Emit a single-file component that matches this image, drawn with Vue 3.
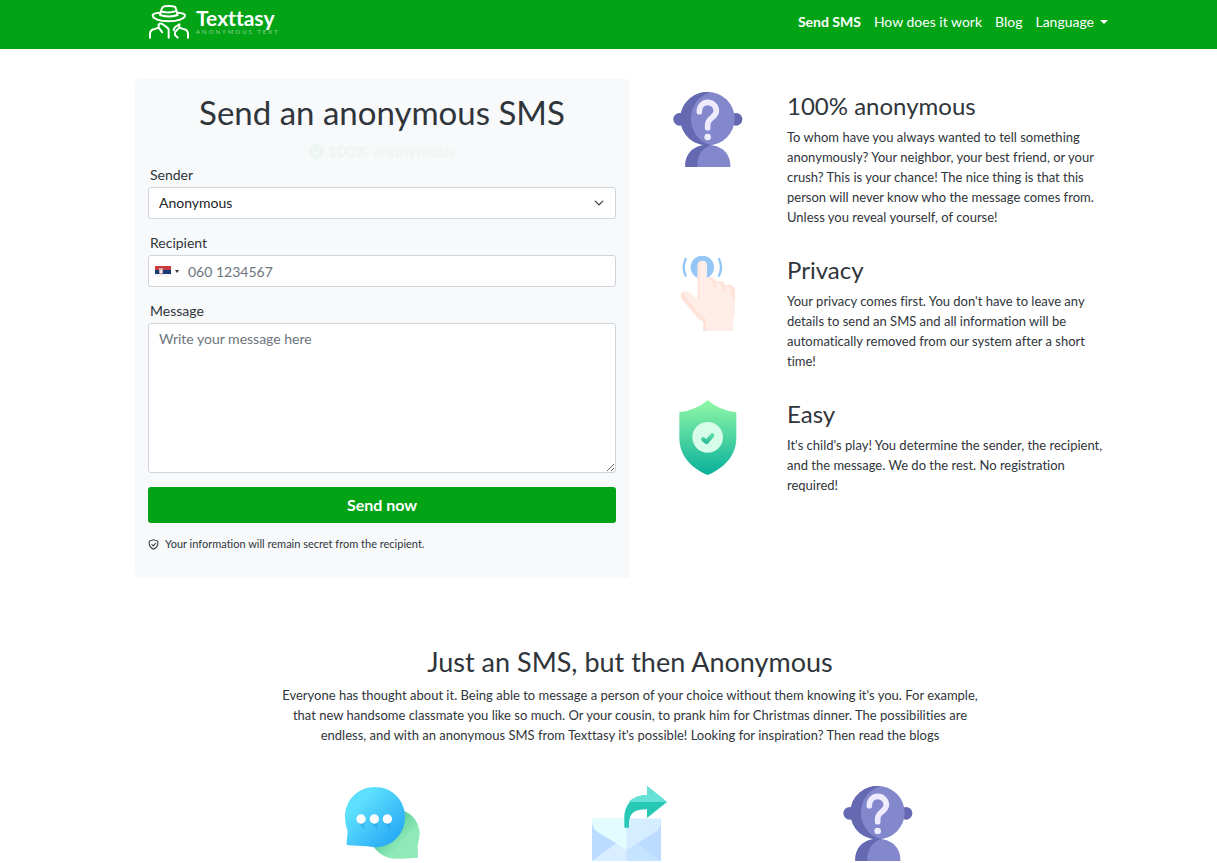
<script setup>
import { ref } from 'vue'

const sender = ref('Anonymous')
const recipient = ref('')
const message = ref('')

const features = [
  {
    icon: 'person',
    title: '100% anonymous',
    text: 'To whom have you always wanted to tell something anonymously? Your neighbor, your best friend, or your crush? This is your chance! The nice thing is that this person will never know who the message comes from. Unless you reveal yourself, of course!',
  },
  {
    icon: 'touch',
    title: 'Privacy',
    text: "Your privacy comes first. You don't have to leave any details to send an SMS and all information will be automatically removed from our system after a short time!",
  },
  {
    icon: 'shield',
    title: 'Easy',
    text: "It's child's play! You determine the sender, the recipient, and the message. We do the rest. No registration required!",
  },
]
</script>

<template>
  <svg class="defs" aria-hidden="true">
    <defs>
      <linearGradient id="shield-fill" x1="0" y1="0" x2="0" y2="1">
        <stop offset="0" stop-color="#92f8a6" />
        <stop offset="1" stop-color="#08b09b" />
      </linearGradient>
      <linearGradient id="tick-fill" x1="0" y1="0" x2="0" y2="1">
        <stop offset="0" stop-color="#5ddaa2" />
        <stop offset="1" stop-color="#2bbf9c" />
      </linearGradient>
      <linearGradient id="bubble-fill" x1="0" y1="0" x2="1" y2="1">
        <stop offset="0.25" stop-color="#5de0fd" />
        <stop offset="1" stop-color="#1c9df5" />
      </linearGradient>
      <linearGradient id="reply-fill" x1="0" y1="0" x2="1" y2="1">
        <stop offset="0.35" stop-color="#62cf98" />
        <stop offset="0.65" stop-color="#8feab8" />
      </linearGradient>
      <symbol id="person" viewBox="14 36 225 225">
        <circle cx="43" cy="118" r="19" fill="#6569b2" />
        <circle cx="212" cy="118" r="19" fill="#6569b2" />
        <path d="M60 261v-5c0-36 27-62 67-62s68 26 68 62v5z" fill="#8387cb" />
        <path d="M60 261v-5c0-36 27-62 67-62l11 1c-25 8-42 28-42 61v5z" fill="#6569b2" />
        <circle cx="128" cy="116" r="80" fill="#8387cb" />
        <path d="M137 37a80 80 0 1 0 0 158c-35-8-60-40-60-79s25-71 60-79z" fill="#6569b2" />
        <path d="M102 95c0-17 11-28 25-28s26 11 26 26c0 19-26 21-26 41v9" fill="none" stroke="#efebff" stroke-width="17" stroke-linecap="round" stroke-linejoin="round" />
        <circle cx="127" cy="171" r="10" fill="#efebff" />
      </symbol>
      <symbol id="touch" viewBox="14 33 225 225">
        <circle cx="111" cy="67" r="35" fill="#93c6f6" />
        <path d="M61 42q-12 26 0 50M161 42q12 26 0 50" fill="none" stroke="#93c6f6" stroke-width="7" stroke-linecap="round" />
        <path d="M97 61q0-14 14-14t14 14v37q22-4 28 13 20-7 27 10 21-6 29 13v64q0 14-5 26v34h-90v-29q-16-6-24-20L48 160q-4-16 7-21 10-3 18 5l24 17z" fill="#ffeee7" />
        <path d="M125 98q22-4 28 13v22q-8 0-8-8 0-20-20-27zM153 111q20-7 27 10v20q-9 0-9-8 0-17-18-22zM180 121q21-6 29 13v30q-9 0-9-10 0-26-20-33zM48 160q-4-16 7-21 1 8 8 20l41 49q6 7 18 14v36h-8v-29q-16-6-24-20z" fill="#ffe2d8" />
        <path d="M97 61q0-14 14-14-7 4-7 15v98l-7 2z" fill="#ffe5dc" />
      </symbol>
      <symbol id="shield" viewBox="14 27 225 225">
        <path d="M127 27q33 30 86 37v76c0 54-37 91-86 112-49-21-85-58-85-112V64q52-7 85-37z" fill="url(#shield-fill)" />
        <circle cx="127" cy="139" r="46" fill="#d7fdea" />
        <path d="M114 145l9 8 18-20" fill="none" stroke="url(#tick-fill)" stroke-width="13" stroke-linecap="round" stroke-linejoin="round" />
      </symbol>
      <symbol id="chat" viewBox="30 22 225 225">
        <path d="M206 96c35 13 55 51 46 85l-4 20 1 36-48 3c-38 3-66-9-86-36z" fill="url(#reply-fill)" />
        <path d="M120 25c51 0 90 39 90 90s-39 91-90 91l-25-3-54-3c-6 0-7-4-6-9l3-34c-4-11-8-26-8-42 0-51 39-90 90-90z" fill="url(#bubble-fill)" />
        <path d="M69 132l20 21-1-38zM108 132l20 21-1-38zM147 132l20 21-1-38z" fill="#2096dc" opacity=".4" />
        <circle cx="78" cy="121" r="14" fill="#fff" />
        <circle cx="118" cy="121" r="14" fill="#fff" />
        <circle cx="157" cy="121" r="14" fill="#fff" />
      </symbol>
      <symbol id="forward" viewBox="36 22 225 225">
        <path d="M36 120h207v127H36z" fill="#bcdcff" />
        <path d="M36 247l104-76v76z" fill="#d9efff" />
        <path d="M140 171l103 76H140z" fill="#c5e3ff" />
        <path d="M36 120h104v93L50 158q-14-9-14-38z" fill="#e3fdff" />
        <path d="M140 120h103q0 29-14 38l-89 55z" fill="#d5eeff" />
        <path d="M133 147v-28c0-42 27-70 68-70V22l60 48-60 48V92c-38 0-54 11-54 45v10z" fill="#28c8b7" />
        <path d="M146 70c13-14 32-21 55-21V22l60 48z" fill="#67e0d5" />
      </symbol>
    </defs>
  </svg>

  <header class="navbar">
    <div class="container nav-inner">
      <a class="brand" href="#" aria-label="Texttasy home">
        <svg class="brand-mark" viewBox="13 9 120 102" aria-hidden="true">
          <g fill="none" stroke="#fff" stroke-width="6" stroke-linecap="round" stroke-linejoin="round">
            <path d="M46 39l5-18q2-7 9-8 12-2 25 0 8 1 9 8l5 18q-26 9-53 0z" />
            <path d="M53 29q20 5 38-1" />
            <path d="M45 32q-21 2-21 8c0 10 20 18 48 18s49-8 49-18q0-6-21-8" />
            <path d="M16 107V97q0-12 11-15l15-5V67q5-5 11-1l14 10q5 3 5 9v22M42 77l11 14" />
            <path d="M130 107V97q0-12-11-15l-15-5V67l-12 8q-4 3-5 9M104 77L91 90v9l8 8" />
          </g>
        </svg>
        <span class="brand-text">
          <span class="brand-name">Texttasy</span>
          <span class="brand-tag">ANONYMOUS TEXT</span>
        </span>
      </a>
      <nav class="links" aria-label="Main">
        <a class="active" href="#">Send SMS</a>
        <a href="#how">How does it work</a>
        <a href="#blog">Blog</a>
        <button type="button" class="language">Language<span class="caret"></span></button>
      </nav>
    </div>
  </header>

  <main class="page">
    <div class="container intro">
      <form class="card" @submit.prevent>
        <h1>Send an anonymous SMS</h1>
        <p class="badge">
          <svg viewBox="0 0 16 16" aria-hidden="true">
            <circle cx="8" cy="8" r="8" fill="currentColor" />
            <path d="M4.500 8.300l2.500 2.500 4.500-5.300" fill="none" stroke="#f8f9fb" stroke-width="1.500" stroke-linecap="round" />
          </svg>
          100% anonymous
        </p>

        <div class="field">
          <label for="sender">Sender</label>
          <div class="control">
            <select id="sender" v-model="sender">
              <option>Anonymous</option>
              <option>Custom</option>
            </select>
            <svg class="chevron" viewBox="0 0 16 16" aria-hidden="true">
              <path d="M2 5l6 6 6-6" fill="none" stroke="#343a40" stroke-width="2" stroke-linecap="round" stroke-linejoin="round" />
            </svg>
          </div>
        </div>

        <div class="field">
          <label for="recipient">Recipient</label>
          <div class="control phone">
            <button type="button" class="country" aria-label="Select country">
              <svg class="flag" viewBox="0 0 16 11" aria-hidden="true">
                <path fill="#f4f5f6" d="M0 0h16v11H0z" />
                <path fill="#c83a40" d="M0 0h16v4H0z" />
                <path fill="#173c7a" d="M0 4h16v4H0z" />
                <path fill="#dba5a7" d="M4 2h4v5L6 9 4 7z" />
                <path fill="#f6e7e4" d="M5 4h2v3H5z" />
              </svg>
              <span class="caret small"></span>
            </button>
            <input id="recipient" v-model="recipient" type="tel" placeholder="060 1234567" />
          </div>
        </div>

        <div class="field">
          <label for="message">Message</label>
          <textarea id="message" v-model="message" placeholder="Write your message here"></textarea>
        </div>

        <button type="submit" class="send">Send now</button>

        <p class="note">
          <svg viewBox="0 0 16 16" aria-hidden="true">
            <path d="M8 1q3 2 6 2 2 8-6 12-8-4-6-12 3 0 6-2zM5.500 8l2 2 3.500-3.500" fill="none" stroke="currentColor" stroke-width="1.500" stroke-linecap="round" stroke-linejoin="round" />
          </svg>
          Your information will remain secret from the recipient.
        </p>
      </form>

      <section class="features">
        <article v-for="f in features" :key="f.title" class="feature">
          <svg class="picture" aria-hidden="true"><use :href="'#' + f.icon" /></svg>
          <div>
            <h2>{{ f.title }}</h2>
            <p>{{ f.text }}</p>
          </div>
        </article>
      </section>
    </div>

    <section class="about">
      <h2>Just an SMS, but then Anonymous</h2>
      <p>
        Everyone has thought about it. Being able to message a person of your choice without them
        knowing it's you. For example, that new handsome classmate you like so much. Or your cousin,
        to prank him for Christmas dinner. The possibilities are endless, and with an anonymous SMS
        from Texttasy it's possible! Looking for inspiration? Then read the blogs
      </p>
      <div class="steps">
        <svg v-for="icon in ['chat', 'forward', 'person']" :key="icon" class="picture" aria-hidden="true">
          <use :href="'#' + icon" />
        </svg>
      </div>
    </section>
  </main>
</template>

<style>
body {
  margin: 0;
  background: #fff;
  overflow: hidden;
}
</style>

<style scoped>
* {
  box-sizing: border-box;
}
.defs {
  position: absolute;
  width: 0;
  height: 0;
}
.navbar,
.page {
  font-family: Lato, "Liberation Sans", sans-serif;
  font-size: 14px;
  line-height: 20px;
  font-variant-ligatures: none;
  color: #2f353a;
  padding-left: 43px;
}
h1,
h2,
p {
  margin: 0;
  font-weight: 400;
}
button,
input,
select,
textarea {
  font: inherit;
  color: inherit;
}
.container {
  max-width: 990px;
  margin: 0 auto;
}
.navbar {
  background: #02a315;
}
.nav-inner {
  display: flex;
  align-items: center;
  justify-content: space-between;
  padding: 4px 17px 9px 14px;
}
.brand {
  display: flex;
  align-items: center;
  gap: 7px;
  color: #fff;
  text-decoration: none;
}
.brand-mark {
  width: 40px;
  height: 36px;
}
.brand-text {
  display: flex;
  flex-direction: column;
}
.brand-name {
  font-size: 21px;
  line-height: 20px;
  font-weight: 700;
}
.brand-tag {
  font-size: 6px;
  line-height: 8px;
  letter-spacing: 2px;
  opacity: 0.5;
}
.links {
  display: flex;
  gap: 13px;
}
.links a,
.language {
  color: #fff;
  text-decoration: none;
}
.links .active {
  font-weight: 700;
}
.language {
  display: flex;
  align-items: center;
  gap: 6px;
  padding: 0;
  border: 0;
  background: none;
}
.caret {
  border: 4px solid transparent;
  border-top-color: currentColor;
  border-bottom: 0;
}
.caret.small {
  border-width: 3px 2px 0;
}
.page {
  padding-top: 30px;
}
.intro {
  display: grid;
  grid-template-columns: 1fr 1fr;
}
.card {
  display: flex;
  flex-direction: column;
  padding: 12px 14px 24px 13px;
  border-radius: 4px;
  background: #f8f9fb;
}
h1 {
  font-size: 33px;
  line-height: 42px;
  text-align: center;
}
.badge {
  display: flex;
  align-items: center;
  justify-content: center;
  gap: 4px;
  margin: 6px 0 2px;
  font-size: 16px;
  line-height: 24px;
  font-weight: 700;
  color: #edf6f1;
}
.badge svg {
  width: 15px;
  height: 15px;
}
.field {
  display: flex;
  flex-direction: column;
  gap: 2px;
  margin-bottom: 14px;
}
label {
  padding-left: 2px;
}
.control {
  position: relative;
  display: flex;
}
select,
input,
textarea {
  width: 100%;
  height: 32px;
  padding: 5px 10px;
  border: 1px solid #ced4da;
  border-radius: 3px;
  background: #fff;
  outline: 0;
}
select {
  appearance: none;
  color: #212529;
}
textarea {
  height: 150px;
  display: block;
  resize: vertical;
}
.phone input {
  padding-left: 39px;
}
::placeholder {
  color: #6c757d;
  opacity: 1;
}
.chevron {
  position: absolute;
  right: 12px;
  top: 11px;
  width: 10px;
  height: 10px;
  pointer-events: none;
}
.country {
  position: absolute;
  left: 1px;
  top: 1px;
  bottom: 1px;
  display: flex;
  align-items: center;
  gap: 4px;
  padding: 0 6px;
  border: 0;
  background: none;
}
.flag {
  width: 16px;
  height: 11px;
}
.send {
  padding: 8px;
  height: 36px;
  border: 0;
  border-radius: 3px;
  background: #02a315;
  color: #fff;
  font-size: 16px;
  font-weight: 700;
}
.note {
  display: flex;
  align-items: center;
  gap: 6px;
  margin-top: 11px;
  font-size: 11px;
}
.note svg {
  width: 11px;
  height: 11px;
}
.features {
  display: flex;
  flex-direction: column;
  gap: 29px;
  padding: 13px 14px 0 40px;
}
.feature {
  display: grid;
  grid-template-columns: 75px 1fr;
  gap: 42px;
}
.feature p,
.about p {
  font-size: 13px;
}
.picture {
  width: 75px;
  height: 75px;
}
.feature h2 {
  font-size: 24px;
  line-height: 28px;
  margin-bottom: 7px;
}
.about {
  max-width: 742px;
  margin: 69px auto 0;
  text-align: center;
}
.about h2 {
  font-size: 27px;
  line-height: 30px;
  margin-bottom: 8px;
}
.about p {
  padding: 0 15px;
}
.steps {
  display: grid;
  grid-template-columns: repeat(3, 1fr);
  justify-items: center;
  margin-top: 41px;
}
</style>
